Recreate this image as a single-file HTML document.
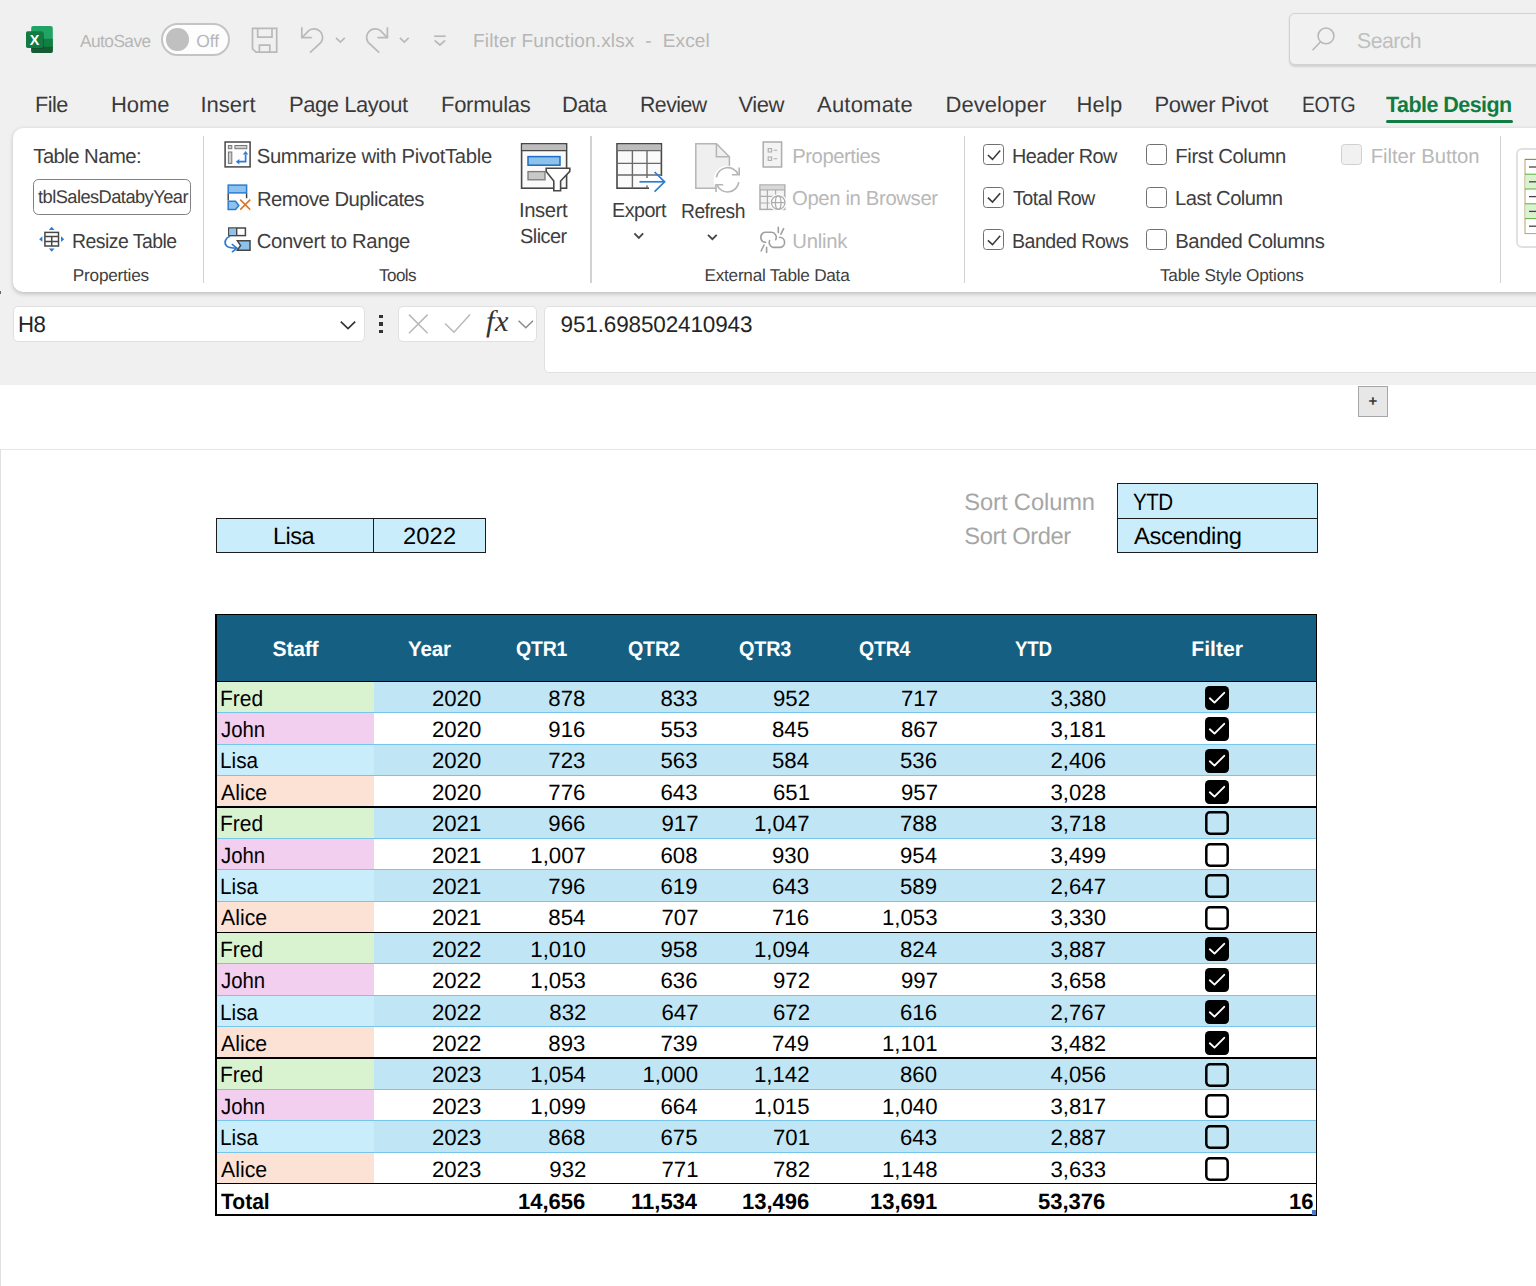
<!DOCTYPE html>
<html lang="en"><head><meta charset="utf-8"><title>Filter Function.xlsx - Excel</title>
<style>
html,body{margin:0;padding:0}
body{width:1536px;height:1286px;overflow:hidden;position:relative;background:#f0f0f0;
 font-family:"Liberation Sans",sans-serif;color:#2b2b2b}
.a,.t,svg.i{position:absolute}
.t{white-space:pre;display:block;transform-origin:0 0;text-rendering:geometricPrecision}
#sheetbg{left:0;top:384.5px;width:1536px;height:902px;background:#fff}
#grid-top{left:0;top:448.8px;width:1536px;height:1.2px;background:#e6e6e6}
#grid-left{left:0;top:449px;width:1.1px;height:840px;background:#e0e0e0}
#search{left:1288.8px;top:12.8px;width:260px;height:50.4px;border:1px solid #d2d2d2;border-radius:6px;
 background:#f1f1f1;box-shadow:0 1.5px 2px rgba(0,0,0,.13)}
#toggle{left:161px;top:23.2px;width:65px;height:28.4px;border:2px solid #c4c4c4;border-radius:17px;background:#fdfdfd}
#knob{left:166.3px;top:28.2px;width:22.4px;height:22.4px;border-radius:50%;background:#c0c0c0}
#tabline{left:1386px;top:119.7px;width:126.5px;height:2.9px;border-radius:1.5px;background:#107c41}
#ribbon{left:13px;top:127.5px;width:1540px;height:164px;background:#fff;border-radius:10px;
 box-shadow:0 1.5px 4px rgba(0,0,0,.2)}
.sep{top:136px;width:1.3px;height:146.5px;background:#d2d2d2}
#tname{left:33px;top:179px;width:156.2px;height:34.4px;border:1px solid #808080;border-radius:5.5px;background:#fff}
.cb{width:18.8px;height:18.8px;border:1px solid #707070;border-radius:3.5px;background:#fff}
.cb.dis{border-color:#d0d0d0;background:#f1f1f1}
#gal{left:1515.6px;top:148px;width:40px;height:96px;border:2px solid #e0e0e0;border-radius:6px;background:#fff}
#namebox{left:13.2px;top:305.9px;width:349.5px;height:34.6px;border:1px solid #e0e0e0;border-radius:5px;background:#fff}
#fxbox{left:397.8px;top:305.9px;width:137px;height:34.6px;border:1px solid #e0e0e0;border-radius:5px;background:#fff}
#fbar{left:543.7px;top:306px;width:1010px;height:65.2px;border:1px solid #e0e0e0;border-radius:5px;background:#fff}
.dot{left:379.4px;width:3.3px;height:3.3px;background:#333}
#plus{left:1357.8px;top:386.1px;width:28.3px;height:28.6px;border:1px solid #a6a6a6;background:#e7e7e7}
.box{border:1px solid #1c1c1c;background:#caedfb;box-sizing:border-box}
.r{left:217px;width:1099px}
.ln{left:217px;width:1099px;height:1px;background:#78c5eb}
.lk{left:217px;width:1099px;height:1.55px;background:#000}
.ck{left:1204.8px;width:24px;height:24px;border-radius:4.5px;box-sizing:border-box}
.ck.on{background:#000}
.ck.off{}
</style></head>
<body>
<!-- window chrome -->
<div id="sheetbg" class="a"></div>
<div id="grid-top" class="a"></div>
<div id="grid-left" class="a"></div>
<div class="a" style="left:0;top:291px;width:1.2px;height:2.6px;background:#666"></div>
<div id="search" class="a"></div>
<div id="toggle" class="a"></div>
<div id="knob" class="a"></div>
<div id="tabline" class="a"></div>
<div id="ribbon" class="a"></div>
<div class="a sep" style="left:203.2px"></div>
<div class="a sep" style="left:590.3px"></div>
<div class="a sep" style="left:963.8px"></div>
<div class="a sep" style="left:1499.5px"></div>
<div id="tname" class="a"></div>
<div class="a cb" style="left:983px;top:144.1px"></div>
<div class="a cb" style="left:1145.8px;top:144.1px"></div>
<div class="a cb" style="left:983px;top:186.8px"></div>
<div class="a cb" style="left:1145.8px;top:186.8px"></div>
<div class="a cb" style="left:983px;top:229.4px"></div>
<div class="a cb" style="left:1145.8px;top:229.4px"></div>
<div class="a cb dis" style="left:1341.3px;top:144.1px"></div>
<div id="gal" class="a"></div>
<div id="namebox" class="a"></div>
<div id="fxbox" class="a"></div>
<div id="fbar" class="a"></div>
<div class="a dot" style="top:315.1px"></div>
<div class="a dot" style="top:322.4px"></div>
<div class="a dot" style="top:329.7px"></div>
<div id="plus" class="a"></div>
<svg class="i" style="left:0;top:0" width="1536" height="420" viewBox="0 0 1536 420">
<g>
<rect x="31.2" y="26" width="21.6" height="26.9" rx="2" fill="#21a366"/>
<rect x="31.2" y="38.8" width="21.6" height="9" fill="#117e42"/>
<path d="M31.2 46.8H52.8V50.9a2 2 0 0 1-2 2H33.2a2 2 0 0 1-2-2z" fill="#155c35"/>
<rect x="31.6" y="32" width="12.2" height="16.8" rx="1.6" fill="#0c3f24" opacity=".55"/>
<rect x="26" y="31.2" width="17" height="16.8" rx="1.7" fill="#117b41"/>
<text x="34.5" y="44.6" font-family="'Liberation Sans',sans-serif" font-weight="700" font-size="14.4" fill="#fff" text-anchor="middle">X</text>
</g>
<g fill="none" stroke="#b9b9b9" stroke-width="1.7" stroke-linejoin="miter"><path d="M252.5 28.4H276.7V52.2H256L252.5 48.8Z"/><path d="M257.7 28.4V37.2H272V28.4"/><path d="M259.4 52.2V45.2H269.8V52.2"/></g>
<g fill="none" stroke="#b9b9b9" stroke-width="1.7"><path d="M301.8 27.2V37.7H311.8"/><path d="M302.2 37.3L309 30.4A8.6 8.6 0 0 1 321 42.4L310 52.6"/><path d="M336 37.8L340.4 42L344.8 37.8"/><path d="M387.4 27.2V37.7H377.4"/><path d="M387 37.3L380.2 30.4A8.6 8.6 0 0 0 368.2 42.4L379.2 52.6"/><path d="M399.9 37.8L404.3 42L408.7 37.8"/><path d="M434.2 36.2H445.6"/><path d="M434.6 40.4L439.9 45L445.2 40.4"/></g>
<g fill="none" stroke="#b8b8b8" stroke-width="1.6"><circle cx="1326" cy="35.9" r="7.9"/><path d="M1320.4 42L1312.5 50.2"/></g>
<path d="M340.8 321.6L348 328.6L355.2 321.6" fill="none" stroke="#333" stroke-width="1.7"/>
<g fill="none" stroke="#b9b9b9" stroke-width="1.5"><path d="M409 314.6L427.6 333.2M427.6 314.6L409 333.2"/><path d="M445 323.5L454 332.2L470 314.6"/></g>
<path d="M518.6 320.8L525.8 327.8L533 320.8" fill="none" stroke="#8a8a8a" stroke-width="1.5"/>
<g fill="none" stroke="#474747" stroke-width="1.5"><rect x="44.9" y="232.4" width="13.6" height="13.6"/><path d="M44.9 236.6H58.5M44.9 241.4H58.5M51.7 236.6V246"/></g>
<g fill="#2b7cd3"><path d="M51.7 226.8L54.6 230H48.8Z"/><path d="M51.7 251.8L54.6 248.6H48.8Z"/><path d="M39.2 239.2L42.4 236.3V242.1Z"/><path d="M64.2 239.2L61 236.3V242.1Z"/></g>
<rect x="225.1" y="142" width="25" height="24.9" fill="#fdfdfd" stroke="#474747" stroke-width="1.5"/><g fill="#cfcfcf" stroke="#777" stroke-width="1"><rect x="228.4" y="145.5" width="3.4" height="3.2"/><rect x="234.9" y="145.5" width="11.9" height="3.2"/><rect x="228.4" y="152" width="3.4" height="11.4"/></g><path d="M245.6 154.4V161.7H238.6" fill="none" stroke="#2b7cd3" stroke-width="1.7"/><path d="M245.6 151L248.3 154.6H242.9Z" fill="#2b7cd3"/><path d="M235.8 161.7L239.3 159V164.4Z" fill="#2b7cd3"/>
<rect x="228.2" y="185.1" width="18.4" height="7.8" fill="#8cc2ec" stroke="#2b7cd3" stroke-width="1.5"/><path d="M228.2 193.4V200.6M246.6 193.4V198.2" stroke="#3c3c3c" stroke-width="1.4" fill="none"/><path d="M228.2 201.3H235.6L238.8 205.5L235.6 209.4H228.2Z" fill="#8cc2ec" stroke="#2b7cd3" stroke-width="1.5"/><path d="M240.2 199.6L250.2 209.6M250.2 199.6L240.2 209.6" stroke="#d9782d" stroke-width="1.6" fill="none"/>
<rect x="228.8" y="228" width="16.6" height="7.6" fill="#fff" stroke="#474747" stroke-width="1.5"/><rect x="229.5" y="228.7" width="6.6" height="6.2" fill="#8cc2ec"/><path d="M236.7 228V235.6" stroke="#474747" stroke-width="1.4"/><path d="M237.4 240.8H250V250.2H237.4L240.6 245.5Z" fill="#8cc2ec" stroke="#474747" stroke-width="1.5"/><g fill="none" stroke="#2b7cd3" stroke-width="1.7"><path d="M230 236.2C225.6 237.6 223.6 242.6 226.4 245.8C228 247.6 230.6 248.2 236.6 248.2"/><path d="M231.8 244.2L237 248.2L232 252.2"/></g>
<rect x="521.6" y="143.8" width="45" height="44.4" fill="#fafafa" stroke="#474747" stroke-width="1.6"/><rect x="522.4" y="144.6" width="43.4" height="5.6" fill="#bdbdbd"/><path d="M521.6 150.6H566.6" stroke="#474747" stroke-width="1.4"/><rect x="528" y="156.6" width="32" height="8.6" fill="#8cc2ec" stroke="#1b6ec2" stroke-width="1.5"/><rect x="528" y="171.6" width="17" height="8.2" fill="#c8c8c8" stroke="#7a7a7a" stroke-width="1.3"/><path d="M546.2 168.2H569.8V171.4L560.6 181V190.8H553.8V181L546.2 171.4Z" fill="#fff" stroke="#474747" stroke-width="1.6" stroke-linejoin="miter"/>
<rect x="617" y="143.8" width="44.4" height="44.4" fill="#fafafa" stroke="#474747" stroke-width="1.6"/><rect x="617.8" y="144.6" width="42.8" height="5.6" fill="#bdbdbd"/><g stroke="#6a6a6a" stroke-width="1.4" fill="none"><path d="M617 150.6H661.4M617 163.4H661.4M617 175H661.4M632.4 150.6V188.2M647 150.6V188.2"/></g><rect x="649" y="176" width="14" height="14" fill="#fff"/><rect x="638" y="178" width="12" height="7.4" fill="#fff"/><g fill="none" stroke="#2b7cd3" stroke-width="1.7"><path d="M639.4 181.8H664.4"/><path d="M654.6 172L664.6 181.8L654.6 191.6"/></g>
<path d="M634.4 233.4L638.8 237.8L643.2 233.4" fill="none" stroke="#474747" stroke-width="1.9"/>
<path d="M695.8 143.8H716.4L729.4 156.8V188.2H695.8Z" fill="#efefef" stroke="#b5b5b5" stroke-width="1.5"/><path d="M716.4 143.8V156.8H729.4" fill="none" stroke="#b5b5b5" stroke-width="1.5"/><circle cx="727.6" cy="179.8" r="14" fill="#fff"/><g fill="none" stroke="#b5b5b5" stroke-width="1.6"><path d="M716.4 177.4A11.4 11.4 0 0 1 738 174.2"/><path d="M738.8 182.2A11.4 11.4 0 0 1 717.2 185.4"/><path d="M739.2 167.6V174.8H732"/><path d="M716 192V184.8H723.2"/></g>
<path d="M708 234.8L712.4 239.2L716.8 234.8" fill="none" stroke="#474747" stroke-width="1.9"/>
<rect x="763.2" y="142" width="18.4" height="25" fill="#f3f3f3" stroke="#adadad" stroke-width="1.5"/><g fill="none" stroke="#adadad" stroke-width="1.1"><rect x="768.2" y="148.6" width="3.4" height="3.4"/><rect x="768.2" y="157" width="3.4" height="3.4"/><path d="M773.6 150.3H777.2M773.6 158.7H777.2"/></g>
<rect x="760" y="185" width="24.8" height="24.4" fill="#f3f3f3" stroke="#adadad" stroke-width="1.5"/><rect x="760.6" y="185.6" width="23.6" height="3.8" fill="#d8d8d8"/><g fill="none" stroke="#adadad" stroke-width="1.2"><path d="M760 189.8H784.8M760 196.4H784.8M760 203H784.8M767.4 189.8V209.4M775.6 189.8V196"/></g><circle cx="778.2" cy="202.6" r="8.6" fill="#fff"/><g fill="none" stroke="#adadad" stroke-width="1.3"><circle cx="778.2" cy="202.6" r="6.8"/><ellipse cx="778.2" cy="202.6" rx="2.8" ry="6.8"/><path d="M771.4 202.6H785"/></g>
<g fill="none" stroke="#a0a0a0" stroke-width="1.6" stroke-linecap="round"><path d="M765.6 242.4A5.1 5.1 0 0 1 765 232.3H771.5A5.1 5.1 0 0 1 775.7 239.7"/><path d="M779.6 237.3A5.1 5.1 0 0 1 780.5 247.4H773A5.1 5.1 0 0 1 769.6 240.5"/><path d="M778.3 227.4V232.6M783.6 228.6L780.9 234.2M764 245L761.1 251M766.6 247.2V252.4"/></g>
<path d="M987.9 155.0L992.5 159.4L1000.2 150.5" fill="none" stroke="#3a3a3a" stroke-width="1.6"/>
<path d="M987.9 197.7L992.5 202.1L1000.2 193.2" fill="none" stroke="#3a3a3a" stroke-width="1.6"/>
<path d="M987.9 240.3L992.5 244.7L1000.2 235.8" fill="none" stroke="#3a3a3a" stroke-width="1.6"/>
<rect x="1525" y="159.4" width="14" height="74.2" fill="#fff" stroke="#b7a56a" stroke-width="1"/>
<path d="M1525 159.4H1537" stroke="#4ea72e" stroke-width=".9"/>
<path d="M1529 167.0H1537" stroke="#444" stroke-width="1.3"/>
<rect x="1525.5" y="174.2" width="12" height="14.8" fill="#d9f2d0"/>
<path d="M1525 174.2H1537" stroke="#4ea72e" stroke-width=".9"/>
<path d="M1529 181.8H1537" stroke="#444" stroke-width="1.3"/>
<path d="M1525 189H1537" stroke="#4ea72e" stroke-width=".9"/>
<path d="M1529 196.6H1537" stroke="#444" stroke-width="1.3"/>
<rect x="1525.5" y="203.8" width="12" height="14.8" fill="#d9f2d0"/>
<path d="M1525 203.8H1537" stroke="#4ea72e" stroke-width=".9"/>
<path d="M1529 211.4H1537" stroke="#444" stroke-width="1.3"/>
<path d="M1525 218.6H1537" stroke="#4ea72e" stroke-width=".9"/>
<path d="M1529 226.2H1537" stroke="#444" stroke-width="1.3"/>
</svg>
<span class="t" style="left:79.5px;top:33.0px;font-size:17.5px;line-height:17.5px;letter-spacing:-0.55px;color:#b6b6b6;transform:scaleX(0.9875);">AutoSave</span>
<span class="t" style="left:196.25px;top:33.0px;font-size:17.5px;line-height:17.5px;letter-spacing:-0.125px;color:#b6b6b6;">Off</span>
<span class="t" style="left:473.0px;top:32.3px;font-size:19px;line-height:19px;letter-spacing:0.155px;color:#b6b6b6;">Filter Function.xlsx  -  Excel</span>
<span class="t" style="left:1356.71px;top:30.5px;font-size:21.5px;line-height:21.5px;letter-spacing:-0.55px;color:#bfbfbf;transform:scaleX(0.9881);">Search</span>
<span class="t" style="left:34.61px;top:94.2px;font-size:22px;line-height:22px;letter-spacing:-0.55px;color:#3a3a3a;transform:scaleX(0.9861);">File</span>
<span class="t" style="left:110.9px;top:94.2px;font-size:22px;line-height:22px;letter-spacing:-0.05px;color:#3a3a3a;">Home</span>
<span class="t" style="left:200.5px;top:94.2px;font-size:22px;line-height:22px;color:#3a3a3a;">Insert</span>
<span class="t" style="left:289.0px;top:94.2px;font-size:22px;line-height:22px;letter-spacing:-0.45px;color:#3a3a3a;">Page Layout</span>
<span class="t" style="left:441.0px;top:94.2px;font-size:22px;line-height:22px;letter-spacing:-0.286px;color:#3a3a3a;">Formulas</span>
<span class="t" style="left:562.0px;top:94.2px;font-size:22px;line-height:22px;letter-spacing:-0.5px;color:#3a3a3a;">Data</span>
<span class="t" style="left:639.53px;top:94.2px;font-size:22px;line-height:22px;letter-spacing:-0.55px;color:#3a3a3a;transform:scaleX(0.967);">Review</span>
<span class="t" style="left:738.5px;top:94.2px;font-size:22px;line-height:22px;letter-spacing:-0.5px;color:#3a3a3a;">View</span>
<span class="t" style="left:817.0px;top:94.2px;font-size:22px;line-height:22px;letter-spacing:0.214px;color:#3a3a3a;">Automate</span>
<span class="t" style="left:945.5px;top:94.2px;font-size:22px;line-height:22px;letter-spacing:0.062px;color:#3a3a3a;">Developer</span>
<span class="t" style="left:1076.5px;top:94.2px;font-size:22px;line-height:22px;letter-spacing:0.167px;color:#3a3a3a;">Help</span>
<span class="t" style="left:1154.5px;top:94.2px;font-size:22px;line-height:22px;letter-spacing:-0.35px;color:#3a3a3a;">Power Pivot</span>
<span class="t" style="left:1301.62px;top:94.2px;font-size:22px;line-height:22px;letter-spacing:-0.55px;color:#3a3a3a;transform:scaleX(0.8826);">EOTG</span>
<span class="t" style="left:1386.4px;top:94.2px;font-size:22px;line-height:22px;letter-spacing:-0.55px;font-weight:700;color:#107c41;transform:scaleX(0.9769);">Table Design</span>
<span class="t" style="left:33.3px;top:147.0px;font-size:20.3px;line-height:20.3px;letter-spacing:-0.55px;color:#3e3e3e;">Table Name:</span>
<span class="t" style="left:37.5px;top:188.4px;font-size:18.4px;line-height:18.4px;letter-spacing:-0.55px;color:#3e3e3e;transform:scaleX(0.9931);">tblSalesDatabyYear</span>
<span class="t" style="left:72.34px;top:231.8px;font-size:20.3px;line-height:20.3px;letter-spacing:-0.55px;color:#3e3e3e;transform:scaleX(0.9579);">Resize Table</span>
<span class="t" style="left:72.8px;top:267.3px;font-size:17.2px;line-height:17.2px;letter-spacing:-0.222px;color:#3e3e3e;">Properties</span>
<span class="t" style="left:256.7px;top:146.7px;font-size:20.3px;line-height:20.3px;letter-spacing:-0.333px;color:#3e3e3e;">Summarize with PivotTable</span>
<span class="t" style="left:256.9px;top:189.6px;font-size:20.3px;line-height:20.3px;letter-spacing:-0.519px;color:#3e3e3e;">Remove Duplicates</span>
<span class="t" style="left:256.7px;top:231.9px;font-size:20.3px;line-height:20.3px;letter-spacing:-0.353px;color:#3e3e3e;">Convert to Range</span>
<span class="t" style="left:378.75px;top:267.3px;font-size:17.2px;line-height:17.2px;letter-spacing:-0.55px;color:#3e3e3e;transform:scaleX(0.9921);">Tools</span>
<span class="t" style="left:519.0px;top:200.7px;font-size:20.3px;line-height:20.3px;letter-spacing:-0.4px;color:#3e3e3e;">Insert</span>
<span class="t" style="left:519.82px;top:227.0px;font-size:20.3px;line-height:20.3px;letter-spacing:-0.55px;color:#3e3e3e;transform:scaleX(0.982);">Slicer</span>
<span class="t" style="left:611.53px;top:200.7px;font-size:20.3px;line-height:20.3px;letter-spacing:-0.55px;color:#3e3e3e;transform:scaleX(0.9738);">Export</span>
<span class="t" style="left:680.75px;top:201.5px;font-size:20.3px;line-height:20.3px;letter-spacing:-0.55px;color:#3e3e3e;transform:scaleX(0.9513);">Refresh</span>
<span class="t" style="left:792.3px;top:146.5px;font-size:20.3px;line-height:20.3px;letter-spacing:-0.478px;color:#b8b8b8;">Properties</span>
<span class="t" style="left:792.0px;top:189.0px;font-size:20.3px;line-height:20.3px;letter-spacing:-0.357px;color:#b8b8b8;">Open in Browser</span>
<span class="t" style="left:792.3px;top:231.5px;font-size:20.3px;line-height:20.3px;letter-spacing:-0.26px;color:#b8b8b8;">Unlink</span>
<span class="t" style="left:704.5px;top:267.3px;font-size:17.2px;line-height:17.2px;letter-spacing:-0.25px;color:#3e3e3e;">External Table Data</span>
<span class="t" style="left:1012.32px;top:146.8px;font-size:20.3px;line-height:20.3px;letter-spacing:-0.55px;color:#3e3e3e;transform:scaleX(0.9762);">Header Row</span>
<span class="t" style="left:1013.0px;top:189.3px;font-size:20.3px;line-height:20.3px;letter-spacing:-0.55px;color:#3e3e3e;transform:scaleX(0.9731);">Total Row</span>
<span class="t" style="left:1012.33px;top:232.0px;font-size:20.3px;line-height:20.3px;letter-spacing:-0.55px;color:#3e3e3e;transform:scaleX(0.9665);">Banded Rows</span>
<span class="t" style="left:1175.3px;top:146.8px;font-size:20.3px;line-height:20.3px;letter-spacing:-0.364px;color:#3e3e3e;">First Column</span>
<span class="t" style="left:1175.3px;top:189.3px;font-size:20.3px;line-height:20.3px;letter-spacing:-0.55px;color:#3e3e3e;transform:scaleX(0.9972);">Last Column</span>
<span class="t" style="left:1175.3px;top:232.0px;font-size:20.3px;line-height:20.3px;letter-spacing:-0.469px;color:#3e3e3e;">Banded Columns</span>
<span class="t" style="left:1370.7px;top:146.8px;font-size:20.3px;line-height:20.3px;letter-spacing:-0.033px;color:#b8b8b8;">Filter Button</span>
<span class="t" style="left:1160.0px;top:267.3px;font-size:17.2px;line-height:17.2px;letter-spacing:-0.233px;color:#3e3e3e;">Table Style Options</span>
<span class="t" style="left:18.42px;top:312.8px;font-size:22.7px;line-height:22.7px;letter-spacing:-0.55px;color:#242424;transform:scaleX(0.9781);">H8</span>
<span class="t" style="left:560.5px;top:313.7px;font-size:22.5px;line-height:22.5px;letter-spacing:-0.133px;color:#242424;">951.698502410943</span>
<span class="t" style="left:485.6px;top:306.6px;font-size:30px;line-height:30px;letter-spacing:0.6px;color:#333;font-family:'Liberation Serif',serif;font-style:italic;transform:scaleX(1.0133);">fx</span>
<span class="t" style="left:1368.4px;top:393.7px;font-size:15px;line-height:15px;font-weight:700;color:#3a3a3a;">+</span>
<!-- worksheet -->
<div class="a box" style="left:215.8px;top:517.6px;width:270.2px;height:35.4px"></div>
<div class="a" style="left:373px;top:518px;width:1.1px;height:34.5px;background:#1c1c1c"></div>
<div class="a box" style="left:1116.7px;top:482.7px;width:201.1px;height:70.3px"></div>
<div class="a" style="left:1117px;top:517.7px;width:200px;height:1.1px;background:#1c1c1c"></div>
<div class="a" style="left:215px;top:613.8px;width:1302.7px;height:1px;display:none"></div>
<div class="a" id="tframe" style="left:215.2px;top:613.9px;width:1102.2px;height:601.8px;background:#000"></div>
<div class="a r" id="thead" style="top:615.3px;height:65.5px;background:#156082"></div>
<div class="a r" style="top:682.00px;height:31.20px;background:#c0e6f5"></div>
<div class="a" style="left:217px;top:682.00px;width:156.6px;height:31.20px;background:#d9f2d0"></div>
<div class="a r" style="top:713.20px;height:31.40px;background:#fff"></div>
<div class="a" style="left:217px;top:713.20px;width:156.6px;height:31.40px;background:#f2ceef"></div>
<div class="a r" style="top:744.60px;height:31.40px;background:#c0e6f5"></div>
<div class="a" style="left:217px;top:744.60px;width:156.6px;height:31.40px;background:#caedfb"></div>
<div class="a r" style="top:776.00px;height:31.40px;background:#fff"></div>
<div class="a" style="left:217px;top:776.00px;width:156.6px;height:31.40px;background:#fbe2d5"></div>
<div class="a r" style="top:807.40px;height:31.40px;background:#c0e6f5"></div>
<div class="a" style="left:217px;top:807.40px;width:156.6px;height:31.40px;background:#d9f2d0"></div>
<div class="a r" style="top:838.80px;height:31.40px;background:#fff"></div>
<div class="a" style="left:217px;top:838.80px;width:156.6px;height:31.40px;background:#f2ceef"></div>
<div class="a r" style="top:870.20px;height:31.40px;background:#c0e6f5"></div>
<div class="a" style="left:217px;top:870.20px;width:156.6px;height:31.40px;background:#caedfb"></div>
<div class="a r" style="top:901.60px;height:31.40px;background:#fff"></div>
<div class="a" style="left:217px;top:901.60px;width:156.6px;height:31.40px;background:#fbe2d5"></div>
<div class="a r" style="top:933.00px;height:31.40px;background:#c0e6f5"></div>
<div class="a" style="left:217px;top:933.00px;width:156.6px;height:31.40px;background:#d9f2d0"></div>
<div class="a r" style="top:964.40px;height:31.40px;background:#fff"></div>
<div class="a" style="left:217px;top:964.40px;width:156.6px;height:31.40px;background:#f2ceef"></div>
<div class="a r" style="top:995.80px;height:31.40px;background:#c0e6f5"></div>
<div class="a" style="left:217px;top:995.80px;width:156.6px;height:31.40px;background:#caedfb"></div>
<div class="a r" style="top:1027.20px;height:31.40px;background:#fff"></div>
<div class="a" style="left:217px;top:1027.20px;width:156.6px;height:31.40px;background:#fbe2d5"></div>
<div class="a r" style="top:1058.60px;height:31.40px;background:#c0e6f5"></div>
<div class="a" style="left:217px;top:1058.60px;width:156.6px;height:31.40px;background:#d9f2d0"></div>
<div class="a r" style="top:1090.00px;height:31.40px;background:#fff"></div>
<div class="a" style="left:217px;top:1090.00px;width:156.6px;height:31.40px;background:#f2ceef"></div>
<div class="a r" style="top:1121.40px;height:31.40px;background:#c0e6f5"></div>
<div class="a" style="left:217px;top:1121.40px;width:156.6px;height:31.40px;background:#caedfb"></div>
<div class="a r" style="top:1152.80px;height:31.40px;background:#fff"></div>
<div class="a" style="left:217px;top:1152.80px;width:156.6px;height:31.40px;background:#fbe2d5"></div>
<div class="a r" style="top:1184px;height:30.2px;background:#fff"></div>
<div class="a ln" style="top:712.20px"></div>
<div class="a ln" style="top:743.60px"></div>
<div class="a ln" style="top:775.00px"></div>
<div class="a lk" style="top:806.05px"></div>
<div class="a ln" style="top:837.80px"></div>
<div class="a ln" style="top:869.20px"></div>
<div class="a ln" style="top:900.60px"></div>
<div class="a lk" style="top:931.65px"></div>
<div class="a ln" style="top:963.40px"></div>
<div class="a ln" style="top:994.80px"></div>
<div class="a ln" style="top:1026.20px"></div>
<div class="a lk" style="top:1057.25px"></div>
<div class="a ln" style="top:1089.00px"></div>
<div class="a ln" style="top:1120.40px"></div>
<div class="a ln" style="top:1151.80px"></div>
<div class="a lk" style="top:1182.85px"></div>
<div class="a" style="left:1311.6px;top:1210.2px;width:4.6px;height:4.4px;background:#4c7ac4"></div>
<div class="a ck on" style="top:685.80px"><svg width="24" height="24" viewBox="0 0 24 24" style="display:block"><path d="M4.8 12.3L9.5 16.6L19.2 6.8" fill="none" stroke="#fff" stroke-width="1.9" stroke-linecap="round" stroke-linejoin="round"/></svg></div>
<div class="a ck on" style="top:717.20px"><svg width="24" height="24" viewBox="0 0 24 24" style="display:block"><path d="M4.8 12.3L9.5 16.6L19.2 6.8" fill="none" stroke="#fff" stroke-width="1.9" stroke-linecap="round" stroke-linejoin="round"/></svg></div>
<div class="a ck on" style="top:748.60px"><svg width="24" height="24" viewBox="0 0 24 24" style="display:block"><path d="M4.8 12.3L9.5 16.6L19.2 6.8" fill="none" stroke="#fff" stroke-width="1.9" stroke-linecap="round" stroke-linejoin="round"/></svg></div>
<div class="a ck on" style="top:780.00px"><svg width="24" height="24" viewBox="0 0 24 24" style="display:block"><path d="M4.8 12.3L9.5 16.6L19.2 6.8" fill="none" stroke="#fff" stroke-width="1.9" stroke-linecap="round" stroke-linejoin="round"/></svg></div>
<div class="a ck off" style="top:811.40px"><svg width="24" height="24" viewBox="0 0 24 24" style="display:block"><rect x="1.3" y="1.3" width="21.4" height="21.4" rx="3.6" fill="none" stroke="#000" stroke-width="2.5"/></svg></div>
<div class="a ck off" style="top:842.80px"><svg width="24" height="24" viewBox="0 0 24 24" style="display:block"><rect x="1.3" y="1.3" width="21.4" height="21.4" rx="3.6" fill="none" stroke="#000" stroke-width="2.5"/></svg></div>
<div class="a ck off" style="top:874.20px"><svg width="24" height="24" viewBox="0 0 24 24" style="display:block"><rect x="1.3" y="1.3" width="21.4" height="21.4" rx="3.6" fill="none" stroke="#000" stroke-width="2.5"/></svg></div>
<div class="a ck off" style="top:905.60px"><svg width="24" height="24" viewBox="0 0 24 24" style="display:block"><rect x="1.3" y="1.3" width="21.4" height="21.4" rx="3.6" fill="none" stroke="#000" stroke-width="2.5"/></svg></div>
<div class="a ck on" style="top:937.00px"><svg width="24" height="24" viewBox="0 0 24 24" style="display:block"><path d="M4.8 12.3L9.5 16.6L19.2 6.8" fill="none" stroke="#fff" stroke-width="1.9" stroke-linecap="round" stroke-linejoin="round"/></svg></div>
<div class="a ck on" style="top:968.40px"><svg width="24" height="24" viewBox="0 0 24 24" style="display:block"><path d="M4.8 12.3L9.5 16.6L19.2 6.8" fill="none" stroke="#fff" stroke-width="1.9" stroke-linecap="round" stroke-linejoin="round"/></svg></div>
<div class="a ck on" style="top:999.80px"><svg width="24" height="24" viewBox="0 0 24 24" style="display:block"><path d="M4.8 12.3L9.5 16.6L19.2 6.8" fill="none" stroke="#fff" stroke-width="1.9" stroke-linecap="round" stroke-linejoin="round"/></svg></div>
<div class="a ck on" style="top:1031.20px"><svg width="24" height="24" viewBox="0 0 24 24" style="display:block"><path d="M4.8 12.3L9.5 16.6L19.2 6.8" fill="none" stroke="#fff" stroke-width="1.9" stroke-linecap="round" stroke-linejoin="round"/></svg></div>
<div class="a ck off" style="top:1062.60px"><svg width="24" height="24" viewBox="0 0 24 24" style="display:block"><rect x="1.3" y="1.3" width="21.4" height="21.4" rx="3.6" fill="none" stroke="#000" stroke-width="2.5"/></svg></div>
<div class="a ck off" style="top:1094.00px"><svg width="24" height="24" viewBox="0 0 24 24" style="display:block"><rect x="1.3" y="1.3" width="21.4" height="21.4" rx="3.6" fill="none" stroke="#000" stroke-width="2.5"/></svg></div>
<div class="a ck off" style="top:1125.40px"><svg width="24" height="24" viewBox="0 0 24 24" style="display:block"><rect x="1.3" y="1.3" width="21.4" height="21.4" rx="3.6" fill="none" stroke="#000" stroke-width="2.5"/></svg></div>
<div class="a ck off" style="top:1156.80px"><svg width="24" height="24" viewBox="0 0 24 24" style="display:block"><rect x="1.3" y="1.3" width="21.4" height="21.4" rx="3.6" fill="none" stroke="#000" stroke-width="2.5"/></svg></div>
<span class="t" style="left:273.11px;top:526.3px;font-size:23.7px;line-height:23.7px;letter-spacing:-0.55px;color:#000;transform:scaleX(0.9938);">Lisa</span>
<span class="t" style="left:403.0px;top:526.3px;font-size:23.7px;line-height:23.7px;letter-spacing:0.133px;color:#000;">2022</span>
<span class="t" style="left:964.3px;top:491.8px;font-size:23.7px;line-height:23.7px;letter-spacing:-0.09px;color:#a6a6a6;">Sort Column</span>
<span class="t" style="left:964.3px;top:526.2px;font-size:23.7px;line-height:23.7px;letter-spacing:-0.422px;color:#a6a6a6;">Sort Order</span>
<span class="t" style="left:1133.13px;top:491.8px;font-size:23.7px;line-height:23.7px;letter-spacing:-0.55px;color:#000;transform:scaleX(0.8686);">YTD</span>
<span class="t" style="left:1134.0px;top:526.2px;font-size:23.7px;line-height:23.7px;letter-spacing:-0.338px;color:#000;">Ascending</span>
<span class="t" style="left:272.5px;top:639.4px;font-size:21.1px;line-height:21.1px;letter-spacing:-0.188px;font-weight:700;color:#fff;">Staff</span>
<span class="t" style="left:408.3px;top:639.4px;font-size:21.1px;line-height:21.1px;letter-spacing:-0.2px;font-weight:700;color:#fff;transform:scaleX(0.9775);">Year</span>
<span class="t" style="left:515.8px;top:639.4px;font-size:21.1px;line-height:21.1px;letter-spacing:-0.2px;font-weight:700;color:#fff;transform:scaleX(0.9242);">QTR1</span>
<span class="t" style="left:628.0px;top:639.4px;font-size:21.1px;line-height:21.1px;letter-spacing:-0.2px;font-weight:700;color:#fff;transform:scaleX(0.9314);">QTR2</span>
<span class="t" style="left:739.4px;top:639.4px;font-size:21.1px;line-height:21.1px;letter-spacing:-0.2px;font-weight:700;color:#fff;transform:scaleX(0.9404);">QTR3</span>
<span class="t" style="left:859.4px;top:639.4px;font-size:21.1px;line-height:21.1px;letter-spacing:-0.2px;font-weight:700;color:#fff;transform:scaleX(0.9238);">QTR4</span>
<span class="t" style="left:1014.6px;top:639.4px;font-size:21.1px;line-height:21.1px;letter-spacing:-0.2px;font-weight:700;color:#fff;transform:scaleX(0.887);">YTD</span>
<span class="t" style="left:1191.3px;top:639.4px;font-size:21.1px;line-height:21.1px;font-weight:700;color:#fff;">Filter</span>
<span class="t" style="left:219.65px;top:687.5px;font-size:22.2px;line-height:22.2px;color:#000;transform:scaleX(0.9455);">Fred</span>
<span class="t" style="left:431.9px;top:687.5px;font-size:22.2px;line-height:22.2px;color:#000;">2020</span>
<span class="t" style="left:548.3px;top:687.5px;font-size:22.2px;line-height:22.2px;color:#000;">878</span>
<span class="t" style="left:660.5px;top:687.5px;font-size:22.2px;line-height:22.2px;color:#000;">833</span>
<span class="t" style="left:773.0px;top:687.5px;font-size:22.2px;line-height:22.2px;color:#000;">952</span>
<span class="t" style="left:901.0px;top:687.5px;font-size:22.2px;line-height:22.2px;color:#000;">717</span>
<span class="t" style="left:1050.51px;top:687.5px;font-size:22.2px;line-height:22.2px;color:#000;">3,380</span>
<span class="t" style="left:220.6px;top:718.9px;font-size:22.2px;line-height:22.2px;color:#000;transform:scaleX(0.917);">John</span>
<span class="t" style="left:431.9px;top:718.9px;font-size:22.2px;line-height:22.2px;color:#000;">2020</span>
<span class="t" style="left:548.3px;top:718.9px;font-size:22.2px;line-height:22.2px;color:#000;">916</span>
<span class="t" style="left:660.5px;top:718.9px;font-size:22.2px;line-height:22.2px;color:#000;">553</span>
<span class="t" style="left:772.0px;top:718.9px;font-size:22.2px;line-height:22.2px;color:#000;">845</span>
<span class="t" style="left:901.0px;top:718.9px;font-size:22.2px;line-height:22.2px;color:#000;">867</span>
<span class="t" style="left:1050.51px;top:718.9px;font-size:22.2px;line-height:22.2px;color:#000;">3,181</span>
<span class="t" style="left:219.66px;top:750.3px;font-size:22.2px;line-height:22.2px;color:#000;transform:scaleX(0.935);">Lisa</span>
<span class="t" style="left:431.9px;top:750.3px;font-size:22.2px;line-height:22.2px;color:#000;">2020</span>
<span class="t" style="left:548.3px;top:750.3px;font-size:22.2px;line-height:22.2px;color:#000;">723</span>
<span class="t" style="left:660.5px;top:750.3px;font-size:22.2px;line-height:22.2px;color:#000;">563</span>
<span class="t" style="left:772.0px;top:750.3px;font-size:22.2px;line-height:22.2px;color:#000;">584</span>
<span class="t" style="left:900.0px;top:750.3px;font-size:22.2px;line-height:22.2px;color:#000;">536</span>
<span class="t" style="left:1050.51px;top:750.3px;font-size:22.2px;line-height:22.2px;color:#000;">2,406</span>
<span class="t" style="left:220.6px;top:781.7px;font-size:22.2px;line-height:22.2px;color:#000;transform:scaleX(0.9583);">Alice</span>
<span class="t" style="left:431.9px;top:781.7px;font-size:22.2px;line-height:22.2px;color:#000;">2020</span>
<span class="t" style="left:548.3px;top:781.7px;font-size:22.2px;line-height:22.2px;color:#000;">776</span>
<span class="t" style="left:660.5px;top:781.7px;font-size:22.2px;line-height:22.2px;color:#000;">643</span>
<span class="t" style="left:773.0px;top:781.7px;font-size:22.2px;line-height:22.2px;color:#000;">651</span>
<span class="t" style="left:901.0px;top:781.7px;font-size:22.2px;line-height:22.2px;color:#000;">957</span>
<span class="t" style="left:1050.51px;top:781.7px;font-size:22.2px;line-height:22.2px;color:#000;">3,028</span>
<span class="t" style="left:219.65px;top:813.1px;font-size:22.2px;line-height:22.2px;color:#000;transform:scaleX(0.9455);">Fred</span>
<span class="t" style="left:431.9px;top:813.1px;font-size:22.2px;line-height:22.2px;color:#000;">2021</span>
<span class="t" style="left:548.3px;top:813.1px;font-size:22.2px;line-height:22.2px;color:#000;">966</span>
<span class="t" style="left:661.5px;top:813.1px;font-size:22.2px;line-height:22.2px;color:#000;">917</span>
<span class="t" style="left:754.01px;top:813.1px;font-size:22.2px;line-height:22.2px;color:#000;">1,047</span>
<span class="t" style="left:900.0px;top:813.1px;font-size:22.2px;line-height:22.2px;color:#000;">788</span>
<span class="t" style="left:1050.51px;top:813.1px;font-size:22.2px;line-height:22.2px;color:#000;">3,718</span>
<span class="t" style="left:220.6px;top:844.5px;font-size:22.2px;line-height:22.2px;color:#000;transform:scaleX(0.917);">John</span>
<span class="t" style="left:431.9px;top:844.5px;font-size:22.2px;line-height:22.2px;color:#000;">2021</span>
<span class="t" style="left:530.31px;top:844.5px;font-size:22.2px;line-height:22.2px;color:#000;">1,007</span>
<span class="t" style="left:660.5px;top:844.5px;font-size:22.2px;line-height:22.2px;color:#000;">608</span>
<span class="t" style="left:772.0px;top:844.5px;font-size:22.2px;line-height:22.2px;color:#000;">930</span>
<span class="t" style="left:900.0px;top:844.5px;font-size:22.2px;line-height:22.2px;color:#000;">954</span>
<span class="t" style="left:1050.51px;top:844.5px;font-size:22.2px;line-height:22.2px;color:#000;">3,499</span>
<span class="t" style="left:219.66px;top:875.9px;font-size:22.2px;line-height:22.2px;color:#000;transform:scaleX(0.935);">Lisa</span>
<span class="t" style="left:431.9px;top:875.9px;font-size:22.2px;line-height:22.2px;color:#000;">2021</span>
<span class="t" style="left:548.3px;top:875.9px;font-size:22.2px;line-height:22.2px;color:#000;">796</span>
<span class="t" style="left:660.5px;top:875.9px;font-size:22.2px;line-height:22.2px;color:#000;">619</span>
<span class="t" style="left:772.0px;top:875.9px;font-size:22.2px;line-height:22.2px;color:#000;">643</span>
<span class="t" style="left:900.0px;top:875.9px;font-size:22.2px;line-height:22.2px;color:#000;">589</span>
<span class="t" style="left:1050.51px;top:875.9px;font-size:22.2px;line-height:22.2px;color:#000;">2,647</span>
<span class="t" style="left:220.6px;top:907.3px;font-size:22.2px;line-height:22.2px;color:#000;transform:scaleX(0.9583);">Alice</span>
<span class="t" style="left:431.9px;top:907.3px;font-size:22.2px;line-height:22.2px;color:#000;">2021</span>
<span class="t" style="left:548.3px;top:907.3px;font-size:22.2px;line-height:22.2px;color:#000;">854</span>
<span class="t" style="left:661.5px;top:907.3px;font-size:22.2px;line-height:22.2px;color:#000;">707</span>
<span class="t" style="left:772.0px;top:907.3px;font-size:22.2px;line-height:22.2px;color:#000;">716</span>
<span class="t" style="left:882.01px;top:907.3px;font-size:22.2px;line-height:22.2px;color:#000;">1,053</span>
<span class="t" style="left:1050.51px;top:907.3px;font-size:22.2px;line-height:22.2px;color:#000;">3,330</span>
<span class="t" style="left:219.65px;top:938.7px;font-size:22.2px;line-height:22.2px;color:#000;transform:scaleX(0.9455);">Fred</span>
<span class="t" style="left:431.9px;top:938.7px;font-size:22.2px;line-height:22.2px;color:#000;">2022</span>
<span class="t" style="left:530.31px;top:938.7px;font-size:22.2px;line-height:22.2px;color:#000;">1,010</span>
<span class="t" style="left:660.5px;top:938.7px;font-size:22.2px;line-height:22.2px;color:#000;">958</span>
<span class="t" style="left:754.01px;top:938.7px;font-size:22.2px;line-height:22.2px;color:#000;">1,094</span>
<span class="t" style="left:900.0px;top:938.7px;font-size:22.2px;line-height:22.2px;color:#000;">824</span>
<span class="t" style="left:1050.51px;top:938.7px;font-size:22.2px;line-height:22.2px;color:#000;">3,887</span>
<span class="t" style="left:220.6px;top:970.1px;font-size:22.2px;line-height:22.2px;color:#000;transform:scaleX(0.917);">John</span>
<span class="t" style="left:431.9px;top:970.1px;font-size:22.2px;line-height:22.2px;color:#000;">2022</span>
<span class="t" style="left:530.31px;top:970.1px;font-size:22.2px;line-height:22.2px;color:#000;">1,053</span>
<span class="t" style="left:660.5px;top:970.1px;font-size:22.2px;line-height:22.2px;color:#000;">636</span>
<span class="t" style="left:773.0px;top:970.1px;font-size:22.2px;line-height:22.2px;color:#000;">972</span>
<span class="t" style="left:901.0px;top:970.1px;font-size:22.2px;line-height:22.2px;color:#000;">997</span>
<span class="t" style="left:1050.51px;top:970.1px;font-size:22.2px;line-height:22.2px;color:#000;">3,658</span>
<span class="t" style="left:219.66px;top:1001.5px;font-size:22.2px;line-height:22.2px;color:#000;transform:scaleX(0.935);">Lisa</span>
<span class="t" style="left:431.9px;top:1001.5px;font-size:22.2px;line-height:22.2px;color:#000;">2022</span>
<span class="t" style="left:549.3px;top:1001.5px;font-size:22.2px;line-height:22.2px;color:#000;">832</span>
<span class="t" style="left:661.5px;top:1001.5px;font-size:22.2px;line-height:22.2px;color:#000;">647</span>
<span class="t" style="left:773.0px;top:1001.5px;font-size:22.2px;line-height:22.2px;color:#000;">672</span>
<span class="t" style="left:900.0px;top:1001.5px;font-size:22.2px;line-height:22.2px;color:#000;">616</span>
<span class="t" style="left:1050.51px;top:1001.5px;font-size:22.2px;line-height:22.2px;color:#000;">2,767</span>
<span class="t" style="left:220.6px;top:1032.9px;font-size:22.2px;line-height:22.2px;color:#000;transform:scaleX(0.9583);">Alice</span>
<span class="t" style="left:431.9px;top:1032.9px;font-size:22.2px;line-height:22.2px;color:#000;">2022</span>
<span class="t" style="left:548.3px;top:1032.9px;font-size:22.2px;line-height:22.2px;color:#000;">893</span>
<span class="t" style="left:660.5px;top:1032.9px;font-size:22.2px;line-height:22.2px;color:#000;">739</span>
<span class="t" style="left:772.0px;top:1032.9px;font-size:22.2px;line-height:22.2px;color:#000;">749</span>
<span class="t" style="left:882.01px;top:1032.9px;font-size:22.2px;line-height:22.2px;color:#000;">1,101</span>
<span class="t" style="left:1050.51px;top:1032.9px;font-size:22.2px;line-height:22.2px;color:#000;">3,482</span>
<span class="t" style="left:219.65px;top:1064.3px;font-size:22.2px;line-height:22.2px;color:#000;transform:scaleX(0.9455);">Fred</span>
<span class="t" style="left:431.9px;top:1064.3px;font-size:22.2px;line-height:22.2px;color:#000;">2023</span>
<span class="t" style="left:530.31px;top:1064.3px;font-size:22.2px;line-height:22.2px;color:#000;">1,054</span>
<span class="t" style="left:642.51px;top:1064.3px;font-size:22.2px;line-height:22.2px;color:#000;">1,000</span>
<span class="t" style="left:754.01px;top:1064.3px;font-size:22.2px;line-height:22.2px;color:#000;">1,142</span>
<span class="t" style="left:900.0px;top:1064.3px;font-size:22.2px;line-height:22.2px;color:#000;">860</span>
<span class="t" style="left:1050.51px;top:1064.3px;font-size:22.2px;line-height:22.2px;color:#000;">4,056</span>
<span class="t" style="left:220.6px;top:1095.7px;font-size:22.2px;line-height:22.2px;color:#000;transform:scaleX(0.917);">John</span>
<span class="t" style="left:431.9px;top:1095.7px;font-size:22.2px;line-height:22.2px;color:#000;">2023</span>
<span class="t" style="left:530.31px;top:1095.7px;font-size:22.2px;line-height:22.2px;color:#000;">1,099</span>
<span class="t" style="left:660.5px;top:1095.7px;font-size:22.2px;line-height:22.2px;color:#000;">664</span>
<span class="t" style="left:754.01px;top:1095.7px;font-size:22.2px;line-height:22.2px;color:#000;">1,015</span>
<span class="t" style="left:882.01px;top:1095.7px;font-size:22.2px;line-height:22.2px;color:#000;">1,040</span>
<span class="t" style="left:1050.51px;top:1095.7px;font-size:22.2px;line-height:22.2px;color:#000;">3,817</span>
<span class="t" style="left:219.66px;top:1127.1px;font-size:22.2px;line-height:22.2px;color:#000;transform:scaleX(0.935);">Lisa</span>
<span class="t" style="left:431.9px;top:1127.1px;font-size:22.2px;line-height:22.2px;color:#000;">2023</span>
<span class="t" style="left:548.3px;top:1127.1px;font-size:22.2px;line-height:22.2px;color:#000;">868</span>
<span class="t" style="left:660.5px;top:1127.1px;font-size:22.2px;line-height:22.2px;color:#000;">675</span>
<span class="t" style="left:773.0px;top:1127.1px;font-size:22.2px;line-height:22.2px;color:#000;">701</span>
<span class="t" style="left:900.0px;top:1127.1px;font-size:22.2px;line-height:22.2px;color:#000;">643</span>
<span class="t" style="left:1050.51px;top:1127.1px;font-size:22.2px;line-height:22.2px;color:#000;">2,887</span>
<span class="t" style="left:220.6px;top:1158.5px;font-size:22.2px;line-height:22.2px;color:#000;transform:scaleX(0.9583);">Alice</span>
<span class="t" style="left:431.9px;top:1158.5px;font-size:22.2px;line-height:22.2px;color:#000;">2023</span>
<span class="t" style="left:549.3px;top:1158.5px;font-size:22.2px;line-height:22.2px;color:#000;">932</span>
<span class="t" style="left:661.5px;top:1158.5px;font-size:22.2px;line-height:22.2px;color:#000;">771</span>
<span class="t" style="left:773.0px;top:1158.5px;font-size:22.2px;line-height:22.2px;color:#000;">782</span>
<span class="t" style="left:882.01px;top:1158.5px;font-size:22.2px;line-height:22.2px;color:#000;">1,148</span>
<span class="t" style="left:1050.51px;top:1158.5px;font-size:22.2px;line-height:22.2px;color:#000;">3,633</span>
<span class="t" style="left:220.8px;top:1190.6px;font-size:22.2px;line-height:22.2px;font-weight:700;color:#000;transform:scaleX(0.948);">Total</span>
<span class="t" style="left:518.16px;top:1190.6px;font-size:22.2px;line-height:22.2px;font-weight:700;color:#000;transform:scaleX(0.9918);">14,656</span>
<span class="t" style="left:631.35px;top:1190.6px;font-size:22.2px;line-height:22.2px;font-weight:700;color:#000;transform:scaleX(0.9918);">11,534</span>
<span class="t" style="left:741.86px;top:1190.6px;font-size:22.2px;line-height:22.2px;font-weight:700;color:#000;transform:scaleX(0.9918);">13,496</span>
<span class="t" style="left:869.86px;top:1190.6px;font-size:22.2px;line-height:22.2px;font-weight:700;color:#000;transform:scaleX(0.9918);">13,691</span>
<span class="t" style="left:1038.36px;top:1190.6px;font-size:22.2px;line-height:22.2px;font-weight:700;color:#000;transform:scaleX(0.9918);">53,376</span>
<span class="t" style="left:1288.6px;top:1190.6px;font-size:22.2px;line-height:22.2px;font-weight:700;color:#000;transform:scaleX(0.9918);">16</span>
</body></html>
